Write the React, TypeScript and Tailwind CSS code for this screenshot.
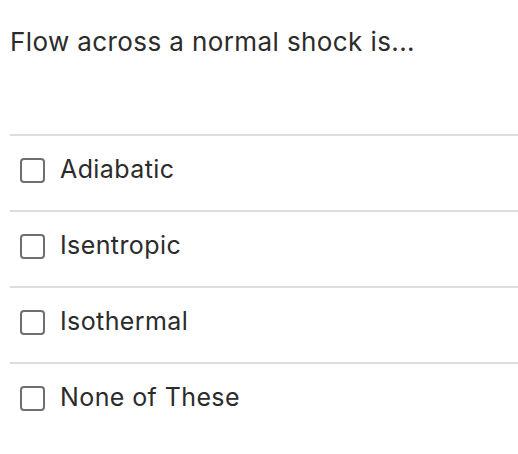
export default function App() {
  const options = ["Adiabatic", "Isentropic", "Isothermal", "None of These"];
  return (
    <div className="min-h-[454px] w-[518px] bg-white pl-[10px] font-['Inter','Open_Sans',sans-serif] text-[#2b2b2b]">
      <h1 className="pt-[25px] text-[26px] leading-[34px] tracking-[0.4px]">Flow across a normal shock is...</h1>
      <ul className="mt-[75px]">
        {options.map((o) => (
          <li key={o} className="flex h-[76px] items-start border-t-2 border-[#dedede]">
            <span className="ml-[10px] mt-[22px] h-[25px] w-[25px] rounded-[4px] border-2 border-[#6f6f6f]" />
            <span className="ml-[15px] mt-[18px] text-[25px] leading-[30px] tracking-[0.4px]">{o}</span>
          </li>
        ))}
      </ul>
    </div>
  );
}
